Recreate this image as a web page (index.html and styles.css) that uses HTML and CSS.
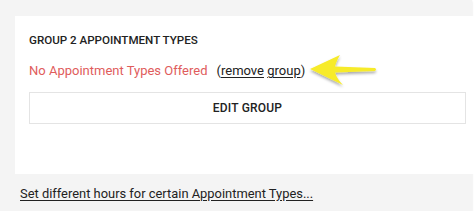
FILE: index.html
```html
<!DOCTYPE html>
<html>
<head>
<meta charset="utf-8">
<link rel="stylesheet" href="styles.css">
</head>
<body>
<div class="panel">
  <div class="card">
    <h2 class="title">GROUP 2 APPOINTMENT TYPES</h2>
    <div class="status">
      <span class="none">No Appointment Types Offered</span>
      <span class="remove">(<a href="#">remove</a> <a href="#">group</a>)</span>
      <svg class="arrow" width="74" height="38" viewBox="0 0 74 38">
        <defs>
          <filter id="sh" x="-20%" y="-30%" width="140%" height="160%">
            <feGaussianBlur in="SourceAlpha" stdDeviation="1.5"/>
            <feOffset dx="0" dy="1.5"/>
            <feComponentTransfer><feFuncA type="linear" slope="0.35"/></feComponentTransfer>
            <feMerge><feMergeNode/><feMergeNode in="SourceGraphic"/></feMerge>
          </filter>
        </defs>
        <path d="M2 17 L32 3 Q28 10 27 14.5 L67 16 Q69 17.5 67 19 L27 20.5 Q29 27 35 33 Z" fill="#f7eb2a" filter="url(#sh)"/>
      </svg>
    </div>
    <button class="edit">EDIT GROUP</button>
  </div>
  <div class="footer">
    <a href="#" class="hours">Set different hours for certain Appointment Types...</a>
  </div>
</div>
</body>
</html>
```
FILE: styles.css
```css
html, body {
  margin: 0;
  padding: 0;
  background: #ffffff;
}
body {
  font-family: Roboto, "Noto Sans", sans-serif;
  color: #222222;
}
.panel {
  width: 472px;
  background: #f4f4f4;
  padding: 16px 0 0 15px;
  box-sizing: border-box;
  box-shadow: 0 1px 2px rgba(0,0,0,0.12);
}
.card {
  background: #ffffff;
  padding: 18px 8px 50px 14px;
  margin-right: -2px;
}
.title {
  margin: 0;
  font-size: 11.6px;
  font-weight: 500;
  line-height: 13px;
  color: #222222;
}
.status {
  position: relative;
  display: flex;
  align-items: baseline;
  margin-top: 16px;
  font-size: 13px;
  line-height: 16px;
}
.none {
  color: #e05c5c;
}
.remove {
  margin-left: 9px;
  color: #222222;
}
.remove a {
  color: #222222;
  text-decoration: underline;
  text-underline-offset: 2px;
}
.arrow {
  position: absolute;
  left: 279px;
  top: -11px;
}
.edit {
  display: block;
  width: 100%;
  margin-top: 13px;
  height: 32px;
  background: #ffffff;
  border: 1.5px solid #e4e4e4;
  font-family: inherit;
  font-size: 12px;
  font-weight: 500;
  color: #222222;
  letter-spacing: 0.2px;
}
.footer {
  padding: 13px 0 12px 5px;
  line-height: 11px;
}
.hours {
  font-size: 12.9px;
  color: #222222;
  text-decoration: underline;
  text-underline-offset: 2px;
}
```
